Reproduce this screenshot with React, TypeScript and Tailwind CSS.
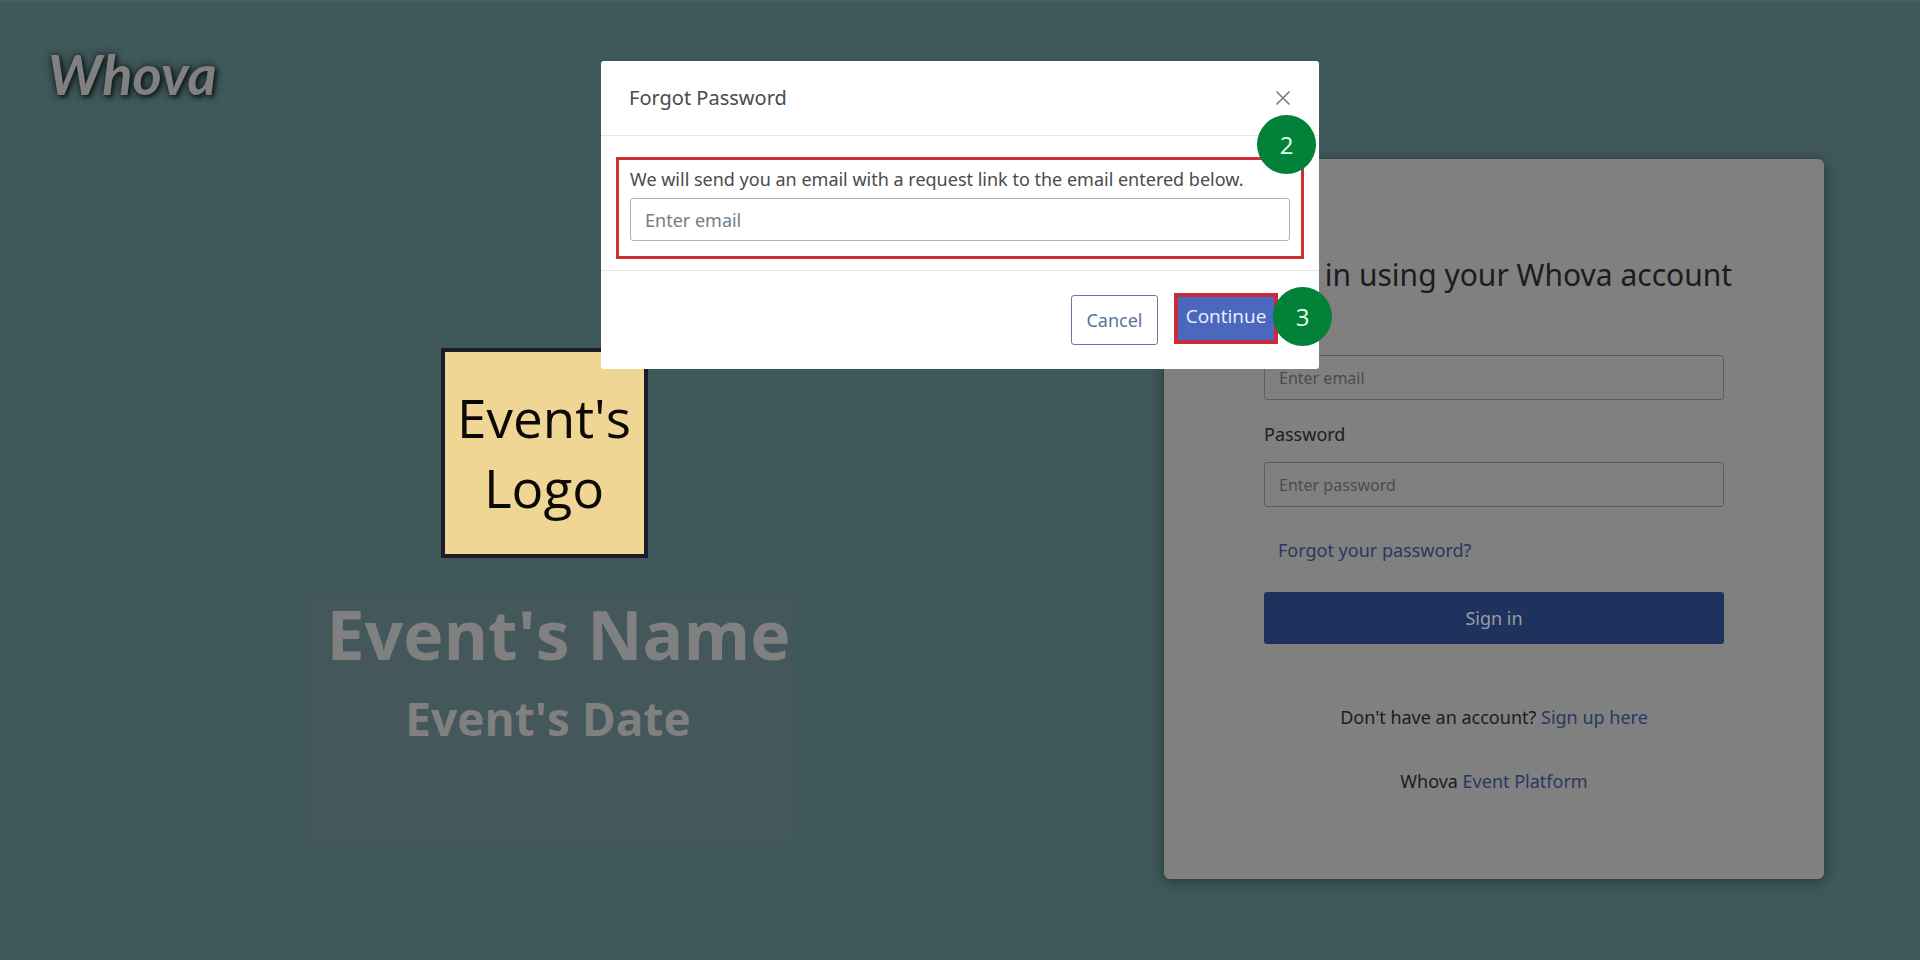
import React from "react";

function StepBadge({ step, className }: { step: number; className: string }) {
  return (
    <span
      className={`absolute flex size-[59px] items-center justify-center rounded-full bg-[#028139] font-['Open_Sans',sans-serif] text-2xl text-[#e6fff0] ${className}`}
    >
      {step}
    </span>
  );
}

function EventPanel() {
  return (
    <section className="flex flex-1 flex-col items-center pr-[68px]">
      <header className="flex h-[346px] w-full items-start px-12 pt-8">
        <a
          href="#home"
          className="font-[Lato,sans-serif] text-[56px] leading-[80px] font-bold text-[#808080] italic [text-shadow:0_0_8px_#101c1c,2px_2px_4px_#101c1c]"
        >
          Whova
        </a>
      </header>
      <div className="-ml-2 flex h-[210px] w-[207px] items-center justify-center border-4 border-[#1d1c2e] bg-[#f0d695] text-center text-[53px] leading-[70px] text-[#0c0905]">
        Event's
        <br />
        Logo
      </div>
      <div className="mt-9 flex h-[249px] w-[485px] flex-col bg-[#44575a] text-[#808080]">
        <h1 className="text-right text-[68px] leading-[80px] font-bold whitespace-nowrap">Event's Name</h1>
        <p className="pt-3 text-center text-[46px] leading-[64px] font-bold">Event's Date</p>
      </div>
    </section>
  );
}

function SignInCard() {
  const field =
    "w-full rounded-[3px] border border-[#5d5d5f] bg-transparent px-3.5 text-base text-[#222] outline-none placeholder:text-[#4a4c4f]";
  return (
    <form
      className="mt-[157px] mr-24 flex h-[720px] w-[660px] flex-col rounded-md bg-[#808080] px-[100px] font-['Noto_Sans',sans-serif] text-lg text-[#1b1c1e] shadow-[0_2px_14px_rgba(0,0,0,0.4)]"
      onSubmit={(e) => e.preventDefault()}
    >
      <h2 className="mt-24 flex justify-center text-3xl leading-10 whitespace-nowrap">
        Sign in using your Whova account
      </h2>
      <input
        type="email"
        aria-label="Email"
        placeholder="Enter email"
        className={`mt-[60px] h-[45px] ${field}`}
      />
      <label htmlFor="password" className="mt-5 leading-7">
        Password
      </label>
      <input id="password" type="password" placeholder="Enter password" className={`mt-3.5 h-[45px] ${field}`} />
      <a href="#forgot" className="mt-[29px] ml-3.5 self-start leading-7 text-[#2a3763]">
        Forgot your password?
      </a>
      <button type="submit" className="mt-7 h-[52px] rounded-[3px] bg-[#1f325e] text-[#999ca3]">
        Sign in
      </button>
      <p className="mt-[59px] text-center leading-7">
        Don't have an account?{" "}
        <a href="#signup" className="text-[#2a3763]">
          Sign up here
        </a>
      </p>
      <p className="mt-9 text-center leading-7">
        Whova{" "}
        <a href="#platform" className="text-[#2a3763]">
          Event Platform
        </a>
      </p>
    </form>
  );
}

function ForgotPasswordDialog() {
  return (
    <div className="absolute inset-x-0 top-[59px] flex justify-center">
      <div
        role="dialog"
        aria-labelledby="dialog-title"
        className="relative flex w-[718px] flex-col rounded-[3px] bg-white font-['Noto_Sans',sans-serif] text-lg text-[#4a4b4e]"
      >
        <div className="flex h-[75px] items-center justify-between border-b border-[#e3e5e8] px-7">
          <h2 id="dialog-title" className="text-xl">
            Forgot Password
          </h2>
          <button type="button" aria-label="Close" className="text-[#7a7a7a]">
            <svg viewBox="0 0 16 16" className="size-4" stroke="currentColor" strokeWidth="1.6">
              <path d="M1.5 1.5 14.5 14.5M14.5 1.5 1.5 14.5" />
            </svg>
          </button>
        </div>
        <div className="border-b border-[#e3e5e8] px-[15px] pt-[21px] pb-[11px]">
          <div className="border-[3px] border-[#cc3034] px-[11px] pt-1 pb-[15px]">
            <label htmlFor="reset-email" className="mb-1 block leading-[30px] whitespace-nowrap">
              We will send you an email with a request link to the email entered below.
            </label>
            <input
              id="reset-email"
              type="email"
              placeholder="Enter email"
              className="block h-[43px] w-full rounded-[3px] border border-[#b0b2b8] px-3.5 outline-none placeholder:text-[#737b84]"
            />
          </div>
        </div>
        <div className="flex h-[98px] items-start justify-end gap-4 pt-[22px] pr-[41px]">
          <button type="button" className="mt-0.5 h-[50px] w-[87px] rounded-[3px] border border-[#5f7ba0] text-[#5b7499]">
            Cancel
          </button>
          <button
            type="button"
            className="h-[51px] w-[104px] border-4 border-[#c72c3c] bg-[#4b68be] pb-1 font-['Open_Sans',sans-serif] text-[19px] text-[#eef2ff]"
          >
            Continue
          </button>
        </div>
        <StepBadge step={2} className="top-[54px] right-[3px]" />
        <StepBadge step={3} className="top-[226px] -right-[13px]" />
      </div>
    </div>
  );
}

export default function App() {
  return (
    <main className="relative flex min-h-screen items-start border-t-2 border-[#4f5c5d] bg-[#3f5859] font-['Open_Sans',sans-serif]">
      <EventPanel />
      <SignInCard />
      <ForgotPasswordDialog />
    </main>
  );
}
